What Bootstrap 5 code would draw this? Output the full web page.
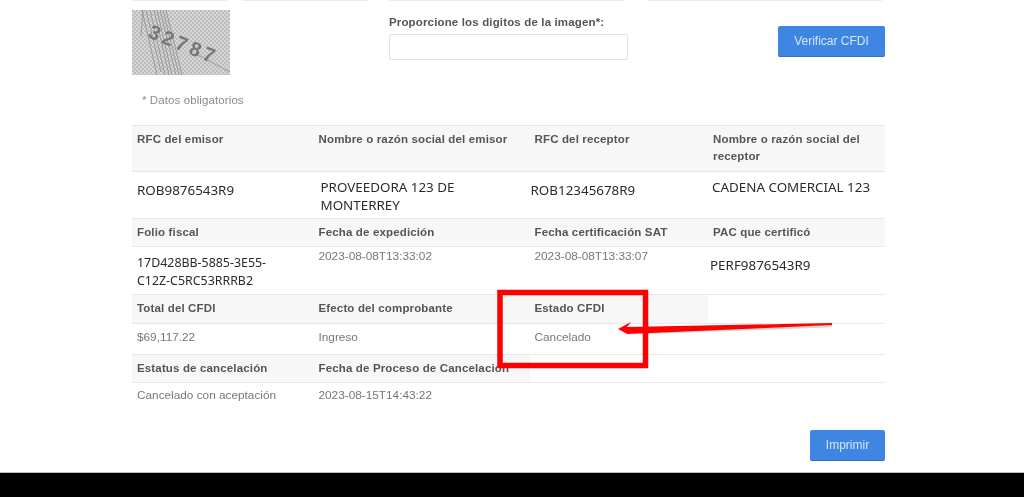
<!DOCTYPE html>
<html lang="es">
<head>
<meta charset="utf-8">
<title>Verificación CFDI</title>
<link href="https://cdn.jsdelivr.net/npm/bootstrap@5.3.0/dist/css/bootstrap.min.css" rel="stylesheet">
<style>
html,body{height:497px;overflow:hidden;background:#fff}
body{font-family:"Liberation Sans",Arial,sans-serif;font-size:12px;color:#777}
.stage{height:497px;display:flex;flex-direction:column;position:relative;overflow:hidden}
.sheet{flex:0 0 472px;padding-left:132px;padding-right:139px;filter:blur(.4px)}
.cut-lines{height:1px;margin-right:-1px;gap:15px}
.cut-lines span{background:#ececec;height:1px}
.cut-a{width:95px}.cut-b{width:125px}.cut-c{width:235px;margin-left:7px}.cut-d{width:235px;margin-left:8px}
.verify-row{height:89px;padding-top:9px}
.captcha{width:98px;height:65px;display:block;flex:none;filter:blur(.5px)}
.digit-block{width:239px;margin-left:159px;padding-top:5px}
.digit-label{font-weight:700;color:#555;font-size:11.5px;letter-spacing:.15px;line-height:14px;margin-bottom:5px;white-space:nowrap}
.digit-input{height:26px;border:1px solid #e2e2e2;border-radius:2px;padding:0 6px;box-shadow:none}
.blue-btn{background:#3f86e2;border:0;border-bottom:1px solid #2f70c6;border-radius:2px;color:#d3e6fb;font-size:12px;padding:0;height:31px;line-height:28px}
.verify-btn{width:107px;margin-left:auto;margin-top:16px}
.note{height:35px;padding-left:10px;padding-top:3px;line-height:14px;color:#8a8a8a;font-size:11.5px;letter-spacing:.1px}
.cfdi-grid{table-layout:fixed;width:753px;margin:0;border-collapse:collapse;color:#777;border-top:1px solid #e8e8e8}
.cfdi-grid td,.cfdi-grid th{padding:0 5px;vertical-align:top;border:0;font-size:11.8px;line-height:17px;box-shadow:none}
.cfdi-grid th{font-weight:700;font-size:11.5px;color:#555;letter-spacing:.15px;background:#f7f7f7;padding-top:5px}
.cfdi-grid tr{border-bottom:1px solid #e8e8e8;border-top:0}
.cfdi-grid tr.last-row{border-bottom:0}
.cfdi-grid .blank{background:#fff}
.h46{height:46px}.h47{height:47px}.h28{height:28px}.h48{height:48px}.h29{height:29px}.h31{height:31px}
.cfdi-grid td.pasted{font-family:"Noto Sans","Open Sans",sans-serif;font-size:13.4px;line-height:18px;color:#2b2b2b}
.cfdi-grid td.top-rfc{padding-top:9px}
.cfdi-grid td.top-prov{padding-top:6px;padding-left:7px}
.cfdi-grid td.top-rec{padding-top:9px;padding-left:1px}
.cfdi-grid td.top-com{padding-top:6px;padding-left:4px}
.cfdi-grid td.top-folio{padding-top:7px;font-size:12.4px}
.cfdi-grid td.top-pac{padding-top:9px;padding-left:2px}
.cfdi-grid td.top-date{padding-top:1px}
.cfdi-grid td.mid-cell{padding-top:5px}
.cfdi-grid td.end-cell{padding-top:4px}
.print-row{padding-top:19px}
.print-btn{width:75px}
.footer-band{flex:1;background:#000;border-top:1px solid #bbb}
.marks{position:absolute;left:0;top:0;width:1024px;height:497px;pointer-events:none;filter:blur(.4px)}
</style>
</head>
<body>
<div class="stage">
  <div class="sheet">
    <div class="cut-lines d-flex"><span class="cut-a"></span><span class="cut-b"></span><span class="cut-c"></span><span class="cut-d"></span></div>
    <div class="verify-row d-flex align-items-start">
      <svg class="captcha" viewBox="0 0 98 65" role="img" aria-label="Imagen de verificación">
        <defs>
          <pattern id="chk" width="4" height="4" patternUnits="userSpaceOnUse">
            <rect width="4" height="4" fill="#d6d6d6"/>
            <rect width="2" height="2" fill="#bdbdbd"/>
            <rect x="2" y="2" width="2" height="2" fill="#bdbdbd"/>
          </pattern>
        </defs>
        <rect width="98" height="65" fill="url(#chk)"/>
        <g stroke="#8d8d8d" stroke-width=".8" fill="none">
          <path d="M10 0L25 65M14 0L29 62M18 0L33 65M22 0L37 65M25 0L40 65M28 0L44 65M31 0L47 65M34 0L50 65M11 0L9 26"/>
          <path d="M66 45L98 62"/>
        </g>
        <text x="15" y="27" transform="rotate(22 15 27)" font-family="Liberation Sans,sans-serif" font-size="20" font-weight="700" fill="#777" letter-spacing="3.500">32787</text>
      </svg>
      <div class="digit-block">
        <div class="digit-label">Proporcione los digitos de la imagen*:</div>
        <input class="form-control digit-input" type="text" aria-label="Dígitos">
      </div>
      <button class="btn blue-btn verify-btn" type="button">Verificar CFDI</button>
    </div>
    <div class="note">* Datos obligatorios</div>
    <table class="table cfdi-grid">
      <colgroup><col style="width:181.5px"><col style="width:216px"><col style="width:178.5px"><col style="width:177px"></colgroup>
      <tbody>
        <tr class="h46"><th>RFC del emisor</th><th>Nombre o razón social del emisor</th><th>RFC del receptor</th><th>Nombre o razón social del receptor</th></tr>
        <tr class="h47"><td class="pasted top-rfc">ROB9876543R9</td><td class="pasted top-prov">PROVEEDORA 123 DE MONTERREY</td><td class="pasted top-rec">ROB12345678R9</td><td class="pasted top-com">CADENA COMERCIAL 123</td></tr>
        <tr class="h28"><th>Folio fiscal</th><th>Fecha de expedición</th><th>Fecha certificación SAT</th><th>PAC que certificó</th></tr>
        <tr class="h48"><td class="pasted top-folio">17D428BB-5885-3E55-<br>C12Z-C5RC53RRRB2</td><td class="top-date">2023-08-08T13:33:02</td><td class="top-date">2023-08-08T13:33:07</td><td class="pasted top-pac">PERF9876543R9</td></tr>
        <tr class="h29"><th>Total del CFDI</th><th>Efecto del comprobante</th><th>Estado CFDI</th><th class="blank"></th></tr>
        <tr class="h31"><td class="mid-cell">$69,117.22</td><td class="mid-cell">Ingreso</td><td class="mid-cell">Cancelado</td><td></td></tr>
        <tr class="h28"><th>Estatus de cancelación</th><th class="text-nowrap">Fecha de Proceso de Cancelación</th><th class="blank"></th><th class="blank"></th></tr>
        <tr class="h28 last-row"><td class="end-cell">Cancelado con aceptación</td><td class="end-cell">2023-08-15T14:43:22</td><td></td><td></td></tr>
      </tbody>
    </table>
    <div class="print-row d-flex justify-content-end">
      <button class="btn blue-btn print-btn" type="button">Imprimir</button>
    </div>
  </div>
  <div class="footer-band"></div>
  <svg class="marks" viewBox="0 0 1024 497" aria-hidden="true">
    <path d="M640 333L832 326" stroke="#555" stroke-opacity=".25" stroke-width="2.500" fill="none"/>
    <rect x="500" y="292.500" width="145.500" height="73" fill="none" stroke="#f00" stroke-width="5.500"/>
    <polygon points="618,329 631,322 627,327 832,323 832,325 627,334 631,336" fill="#f00"/>
  </svg>
</div>
<script src="https://cdn.jsdelivr.net/npm/bootstrap@5.3.0/dist/js/bootstrap.bundle.min.js"></script>
</body>
</html>
